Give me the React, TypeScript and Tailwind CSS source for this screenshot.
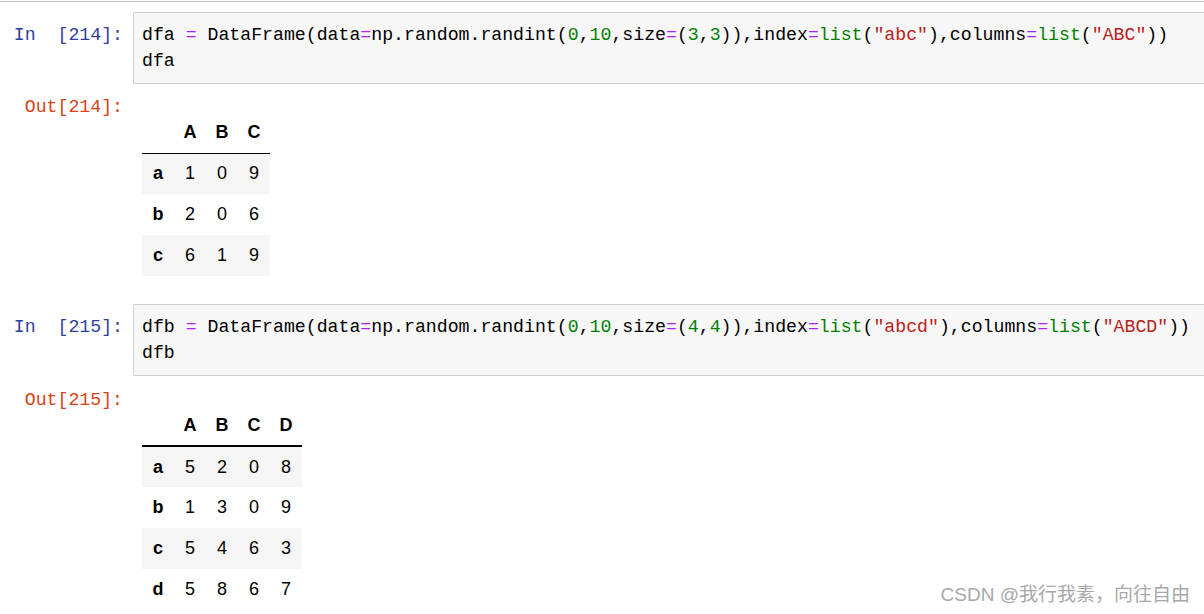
const mono = { fontFamily: '"Liberation Mono", "Noto Sans CJK SC", monospace' }

type Tok = [string, string]

const O = 'text-[#aa22ff]'
const N = 'text-[#008000]'
const S = 'text-[#ba2121]'
const T = 'text-[#000]'

function codeLine(df: string, shape: string, idx: string, cols: string): Tok[] {
  return [
    [df + ' ', T],
    ['=', O],
    [' DataFrame(data', T],
    ['=', O],
    ['np.random.randint(', T],
    ['0', N],
    [',', T],
    ['10', N],
    [',size', T],
    ['=', O],
    ['(', T],
    [shape, N],
    [',', T],
    [shape, N],
    ['))', T],
    [',index', T],
    ['=', O],
    ['list', N],
    ['(', T],
    ['"' + idx + '"', S],
    ['),columns', T],
    ['=', O],
    ['list', N],
    ['(', T],
    ['"' + cols + '"', S],
    ['))', T],
  ]
}

function Cell({ n, df, shape, idx, cols }: { n: number; df: string; shape: string; idx: string; cols: string }) {
  return (
    <div className="flex items-start">
      <div className="w-[133px] shrink-0 pr-[10px] pt-[10px] text-right text-[18.2px] leading-[26px] text-[#303f9f] whitespace-pre" style={mono}>
        {`In  [${n}]:`}
      </div>
      <div
        className="flex-1 h-[72px] border border-r-0 border-[#cfcfcf] bg-[#f7f7f7] rounded-l-[2px] py-[9px] pl-[8px] text-[18.2px] leading-[26px] whitespace-pre"
        style={mono}
      >
        <div>
          {codeLine(df, shape, idx, cols).map(([t, c], i) => (
            <span key={i} className={c}>{t}</span>
          ))}
        </div>
        <div className="text-black">{df}</div>
      </div>
    </div>
  )
}

function Frame({ cols, rows, thick }: { cols: string[]; rows: [string, number[]][]; thick?: boolean }) {
  return (
    <table className="border-collapse text-[18px] text-black" style={{ fontFamily: '"Liberation Sans", Arial, sans-serif' }}>
      <thead>
        <tr className={thick ? 'border-b-2 border-black' : 'border-b border-black'}>
          <th className="w-[32px] h-[41px]" />
          {cols.map((c) => (
            <th key={c} className="w-[32px] h-[41px] text-center font-bold">{c}</th>
          ))}
        </tr>
      </thead>
      <tbody>
        {rows.map(([k, vals], i) => (
          <tr key={k} className={i % 2 === 0 ? 'bg-[#f5f5f5]' : 'bg-white'}>
            <th className="w-[32px] h-[41px] text-center font-bold">{k}</th>
            {vals.map((v, j) => (
              <td key={j} className="w-[32px] h-[41px] text-center">{v}</td>
            ))}
          </tr>
        ))}
      </tbody>
    </table>
  )
}

function Output({ n, children }: { n: number; children: React.ReactNode }) {
  return (
    <div className="flex items-start">
      <div className="w-[133px] shrink-0 pr-[10px] text-right text-[18.2px] leading-[26px] text-[#d84315]" style={mono}>
        {`Out[${n}]:`}
      </div>
      <div className="pl-[9px] pt-[18px]">{children}</div>
    </div>
  )
}

export default function App() {
  return (
    <main className="relative w-[1204px] h-[614px] overflow-hidden bg-white">
      <div className="mt-px h-px bg-[#c4c4c4]" />

      <div className="mt-[10px]">
        <Cell n={214} df="dfa" shape="3" idx="abc" cols="ABC" />
      </div>
      <div className="mt-[10px]">
        <Output n={214}>
          <Frame
            cols={['A', 'B', 'C']}
            rows={[
              ['a', [1, 0, 9]],
              ['b', [2, 0, 6]],
              ['c', [6, 1, 9]],
            ]}
          />
        </Output>
      </div>

      <div className="mt-[28px]">
        <Cell n={215} df="dfb" shape="4" idx="abcd" cols="ABCD" />
      </div>
      <div className="mt-[11px]">
        <Output n={215}>
          <Frame
            thick
            cols={['A', 'B', 'C', 'D']}
            rows={[
              ['a', [5, 2, 0, 8]],
              ['b', [1, 3, 0, 9]],
              ['c', [5, 4, 6, 3]],
              ['d', [5, 8, 6, 7]],
            ]}
          />
        </Output>
      </div>

      {/* watermark */}
      <div
        className="absolute right-[14px] bottom-[5px] text-[19px] text-[#a8a8a8]"
        style={{ fontFamily: '"Liberation Sans", "Noto Sans CJK SC", sans-serif' }}
      >
        CSDN @我行我素，向往自由
      </div>
    </main>
  )
}
